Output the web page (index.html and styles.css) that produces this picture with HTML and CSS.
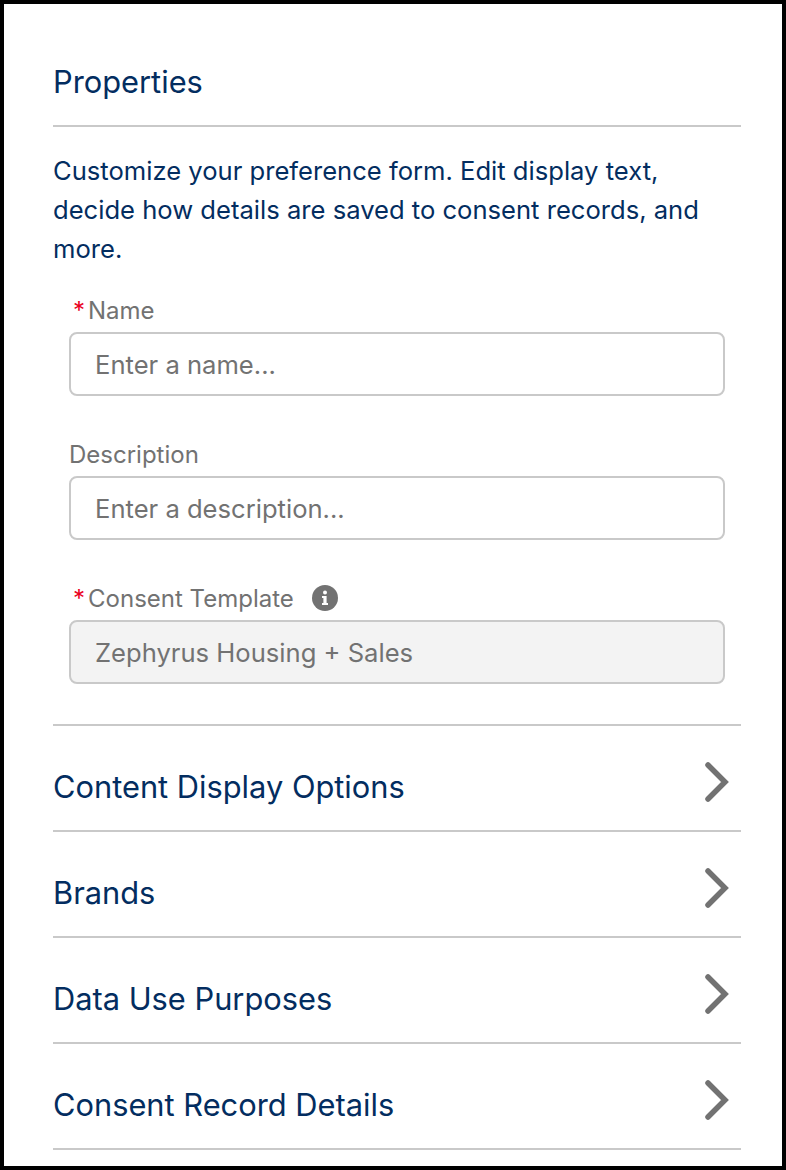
FILE: index.html
```html
<!DOCTYPE html>
<html lang="en">
<head>
  <meta charset="UTF-8">
  <meta name="viewport" content="width=device-width, initial-scale=1.0">
  <title>Properties</title>
  <link rel="stylesheet" href="styles.css">
</head>
<body>
  <div class="panel">
    <h2 class="panel-title">Properties</h2>
    <p class="intro">Customize your preference form. Edit display text, decide how details are saved to consent records, and more.</p>

    <form class="fields">
      <div class="field">
        <label class="field-label"><span class="req">*</span>Name</label>
        <input class="field-input" type="text" placeholder="Enter a name...">
      </div>
      <div class="field">
        <label class="field-label">Description</label>
        <input class="field-input" type="text" placeholder="Enter a description...">
      </div>
      <div class="field">
        <label class="field-label">
          <span class="req">*</span>Consent Template
          <svg class="info" width="26" height="26" viewBox="0 0 26 26">
            <circle cx="13" cy="13" r="13" fill="#727272"/>
            <circle cx="13" cy="7.600" r="2" fill="#fff"/>
            <path d="M10 11h4.600v7h1.400v2h-6v-2h1.400v-5h-1.400z" fill="#fff"/>
          </svg>
        </label>
        <input class="field-input" type="text" value="Zephyrus Housing + Sales" disabled>
      </div>
    </form>

    <div class="sections">
      <div class="section">
        <h3>Content Display Options</h3>
        <svg class="chevron" width="24" height="40" viewBox="0 0 24 40"><path d="M3 3l17 17L3 37" fill="none" stroke="#727272" stroke-width="5.500" stroke-linecap="round"/></svg>
      </div>
      <div class="section">
        <h3>Brands</h3>
        <svg class="chevron" width="24" height="40" viewBox="0 0 24 40"><path d="M3 3l17 17L3 37" fill="none" stroke="#727272" stroke-width="5.500" stroke-linecap="round"/></svg>
      </div>
      <div class="section">
        <h3>Data Use Purposes</h3>
        <svg class="chevron" width="24" height="40" viewBox="0 0 24 40"><path d="M3 3l17 17L3 37" fill="none" stroke="#727272" stroke-width="5.500" stroke-linecap="round"/></svg>
      </div>
      <div class="section">
        <h3>Consent Record Details</h3>
        <svg class="chevron" width="24" height="40" viewBox="0 0 24 40"><path d="M3 3l17 17L3 37" fill="none" stroke="#727272" stroke-width="5.500" stroke-linecap="round"/></svg>
      </div>
    </div>
  </div>
</body>
</html>
```

FILE: styles.css
```css
* {
  box-sizing: border-box;
}
html, body {
  margin: 0;
  padding: 0;
  height: 100%;
}
body {
  background: #000;
  font-family: Inter, "Liberation Sans", sans-serif;
  overflow: hidden;
}
.panel {
  width: 778px;
  height: 1162px;
  margin: 4px;
  padding: 60px 41px 0 49px;
  background: #fff;
  overflow: hidden;
}
.panel-title {
  margin: 0;
  height: 63px;
  font-size: 30.800px;
  line-height: 36px;
  font-weight: 400;
  color: #032d60;
  border-bottom: 2px solid #c9c9c9;
}
.intro {
  margin: 24px 0 0;
  font-size: 25.600px;
  line-height: 39px;
  color: #032d60;
}
.fields {
  margin-top: 20px;
  padding: 0 16px 40px;
  border-bottom: 2px solid #c9c9c9;
}
.field {
  margin-bottom: 36px;
}
.field:last-child {
  margin-bottom: 0;
}
.field-label {
  display: flex;
  align-items: center;
  height: 44px;
  font-size: 24px;
  color: #727272;
}
.req {
  color: #ea001e;
  margin: 0 3px 0 4px;
}
.info {
  margin-left: 18px;
}
.field-input {
  display: block;
  width: 100%;
  height: 64px;
  padding: 0 24px;
  border: 2px solid #c9c9c9;
  border-radius: 8px;
  background: #fff;
  font-family: inherit;
  font-size: 25.600px;
  color: #727272;
}
.field-input::placeholder {
  color: #727272;
  opacity: 1;
}
.field-input:disabled {
  background: #f3f3f3;
  -webkit-text-fill-color: #727272;
  opacity: 1;
}
.section {
  display: flex;
  align-items: center;
  justify-content: space-between;
  height: 106px;
  padding: 16px 12px 0 0;
  border-bottom: 2px solid #c9c9c9;
}
.section h3 {
  margin: 0;
  font-size: 30.800px;
  font-weight: 400;
  color: #032d60;
}
.chevron {
  margin-bottom: 8px;
}
```
